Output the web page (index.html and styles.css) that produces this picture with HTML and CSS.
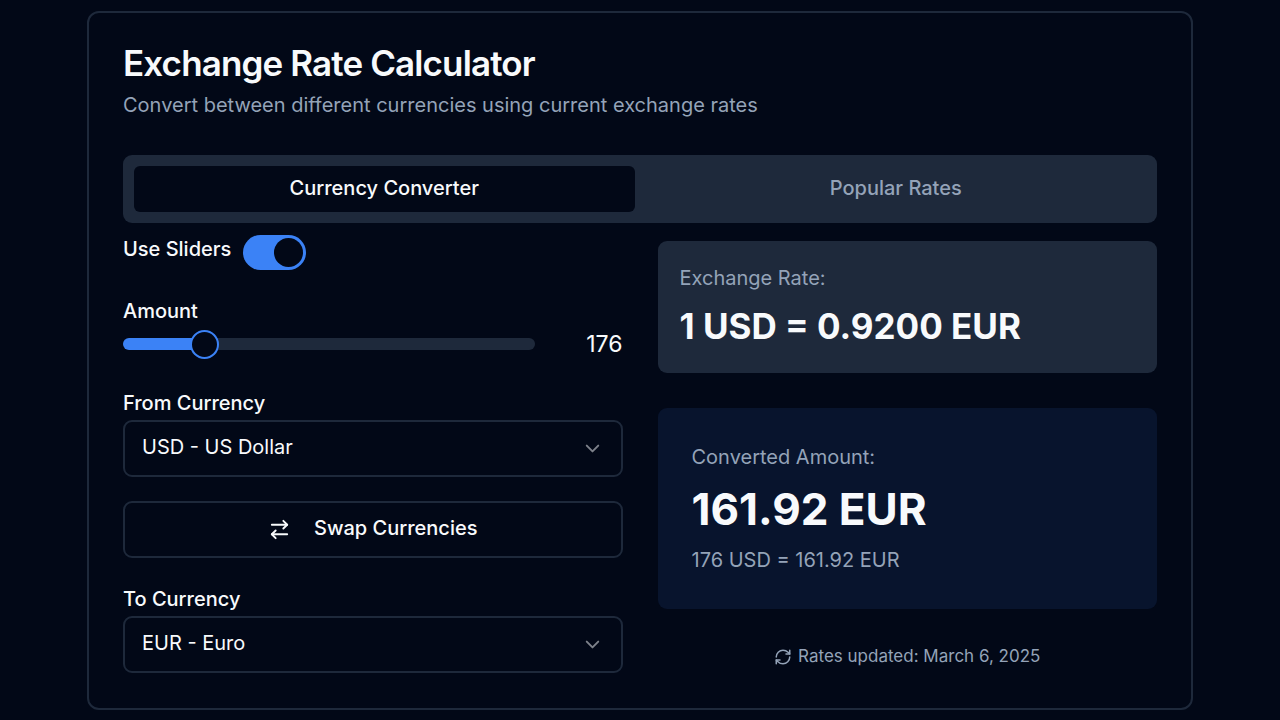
FILE: index.html
```html
<!DOCTYPE html>
<html lang="en">
  <head>
    <meta charset="UTF-8" />
    <meta name="viewport" content="width=device-width, initial-scale=1.0" />
    <title>Exchange Rate Calculator</title>
    <link rel="stylesheet" href="styles.css">
  </head>

  <body>
    <main class="card">
      <h1>Exchange Rate Calculator</h1>
      <p class="description">Convert between different currencies using current exchange rates</p>

      <div class="tabs" role="tablist">
        <button type="button" class="tab active" role="tab" aria-selected="true">Currency Converter</button>
        <button type="button" class="tab" role="tab" aria-selected="false">Popular Rates</button>
      </div>

      <div class="converter">
        <form class="form">
          <div class="switch-row">
            <label for="use-sliders">Use Sliders</label>
            <input type="checkbox" id="use-sliders" class="switch" role="switch" checked />
          </div>

          <div class="field">
            <label for="amount">Amount</label>
            <div class="slider-row">
              <input type="range" id="amount" class="slider" min="1" max="1000" value="176" style="--fill: 19%" />
              <output for="amount" class="amount">176</output>
            </div>
          </div>

          <div class="field">
            <label for="from">From Currency</label>
            <div class="select">
              <select id="from">
                <option selected>USD - US Dollar</option>
                <option>EUR - Euro</option>
              </select>
              <svg class="icon chevron" viewBox="0 0 24 24"><path d="m6 9 6 6 6-6" /></svg>
            </div>
          </div>

          <button type="button" class="swap">
            <svg class="icon" viewBox="0 0 24 24">
              <path d="m16 3 4 4-4 4" />
              <path d="M20 7H4" />
              <path d="m8 21-4-4 4-4" />
              <path d="M4 17h16" />
            </svg>
            <span>Swap Currencies</span>
          </button>

          <div class="field">
            <label for="to">To Currency</label>
            <div class="select">
              <select id="to">
                <option>USD - US Dollar</option>
                <option selected>EUR - Euro</option>
              </select>
              <svg class="icon chevron" viewBox="0 0 24 24"><path d="m6 9 6 6 6-6" /></svg>
            </div>
          </div>
        </form>

        <div class="results">
          <section class="rate">
            <p class="muted">Exchange Rate:</p>
            <p class="rate-value">1 USD = 0.9200 EUR</p>
          </section>

          <section class="converted">
            <p class="muted">Converted Amount:</p>
            <p class="converted-value">161.92 EUR</p>
            <p class="muted">176 USD = 161.92 EUR</p>
          </section>

          <p class="updated">
            <svg class="icon refresh" viewBox="0 0 24 24">
              <path d="M3 12a9 9 0 0 1 9-9 9.75 9.75 0 0 1 6.74 2.74L21 8" />
              <path d="M21 3v5h-5" />
              <path d="M21 12a9 9 0 0 1-9 9 9.75 9.75 0 0 1-6.74-2.74L3 16" />
              <path d="M8 16H3v5" />
            </svg>
            Rates updated: March 6, 2025
          </p>
        </div>
      </div>
    </main>
  </body>
</html>
```
FILE: styles.css
```css
* {
  margin: 0;
  padding: 0;
  box-sizing: border-box;
}

body {
  padding: 11px 16px;
  background-color: #020817;
  color: #f8fafc;
  font-family: Inter, sans-serif;
  font-size: 20px;
  line-height: 28px;
}

button,
select {
  font: inherit;
  color: inherit;
}

.card {
  max-width: 1106px;
  margin: 0 auto;
  padding: 33px 34px 35px;
  border: 2px solid #1e293b;
  border-radius: 12px;
}

h1 {
  font-size: 35px;
  line-height: 35px;
  font-weight: 600;
  letter-spacing: -0.025em;
}

.description {
  margin-top: 10px;
  color: #94a3b8;
}

.tabs {
  display: grid;
  grid-template-columns: 1fr 1fr;
  gap: 11px;
  margin-top: 36px;
  padding: 11px;
  border-radius: 9px;
  background-color: #1e293b;
}

.tab {
  height: 46px;
  padding-bottom: 2px;
  border: none;
  border-radius: 6px;
  background: none;
  color: #94a3b8;
  font-weight: 500;
  cursor: pointer;
}

.tab.active {
  background-color: #020817;
  color: #f8fafc;
}

.converter {
  display: grid;
  grid-template-columns: 1fr 1fr;
  gap: 35px;
  margin-top: 12px;
}

.switch-row {
  display: flex;
  align-items: flex-start;
  gap: 12px;
}

label {
  display: block;
  font-weight: 500;
}

.switch {
  appearance: none;
  display: flex;
  justify-content: flex-end;
  width: 63px;
  height: 35px;
  padding: 3px;
  border-radius: 18px;
  background-color: #3b82f6;
  cursor: pointer;
}

.switch::before {
  content: "";
  width: 29px;
  height: 29px;
  border-radius: 50%;
  background-color: #020817;
}

.switch:not(:checked) {
  justify-content: flex-start;
  background-color: #1e293b;
}

.field {
  margin-top: 27px;
}

.field label {
  margin-bottom: 3px;
}

.slider-row {
  display: flex;
  align-items: center;
  justify-content: space-between;
  height: 32px;
  margin-bottom: 29px;
}

.slider {
  appearance: none;
  width: 412px;
  height: 12px;
  border-radius: 6px;
  background: linear-gradient(to right, #3b82f6 var(--fill), #1e293b var(--fill));
}

.slider::-webkit-slider-thumb {
  appearance: none;
  width: 29px;
  height: 29px;
  border: 2px solid #3b82f6;
  border-radius: 50%;
  background-color: #020817;
}

.amount {
  font-size: 23px;
}

.select {
  position: relative;
}

.select select {
  appearance: none;
  display: block;
  width: 100%;
  height: 57px;
  padding: 0 52px 3px 17px;
  border: 2px solid #1e293b;
  border-radius: 9px;
  background-color: #020817;
}

.icon {
  width: 23px;
  height: 23px;
  fill: none;
  stroke: currentColor;
  stroke-width: 2;
  stroke-linecap: round;
  stroke-linejoin: round;
}

.chevron {
  position: absolute;
  top: 17px;
  right: 19px;
  opacity: 0.5;
  pointer-events: none;
}

.swap {
  display: flex;
  align-items: center;
  justify-content: center;
  gap: 23px;
  width: 100%;
  height: 57px;
  margin-top: 24px;
  border: 2px solid #1e293b;
  border-radius: 9px;
  background-color: #020817;
  font-weight: 500;
  cursor: pointer;
}

.swap span {
  padding-bottom: 3px;
}

.results {
  padding-top: 6px;
}

.muted {
  color: #94a3b8;
}

.rate {
  padding: 23px 22px;
  border-radius: 9px;
  background-color: #1e293b;
}

.rate-value {
  margin-top: 10px;
  font-size: 35px;
  line-height: 48px;
  font-weight: 700;
}

.converted {
  margin-top: 35px;
  padding: 35px 34px;
  border-radius: 9px;
  background-color: #08142d;
}

.converted-value {
  margin: 12px 0 11px;
  font-size: 44px;
  line-height: 52px;
  font-weight: 700;
}

.updated {
  display: flex;
  align-items: center;
  justify-content: center;
  gap: 6px;
  margin-top: 36px;
  color: #94a3b8;
  font-size: 17px;
  line-height: 23px;
}

.refresh {
  width: 18px;
  height: 18px;
}
```
